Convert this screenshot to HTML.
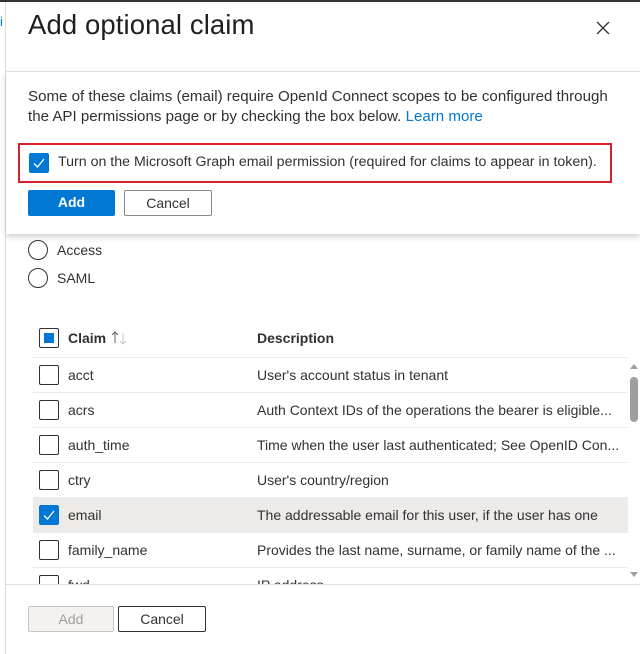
<!DOCTYPE html>
<html><head><style>
*{margin:0;padding:0;box-sizing:border-box}
body{width:640px;height:654px;overflow:hidden;background:#fff;font-family:"Liberation Sans",sans-serif;color:#323130;position:relative}
.abs{position:absolute;white-space:nowrap}
.cb{position:absolute;width:20px;height:20px;border:1px solid #323130;border-radius:2px;background:#fff}
.cb.on{background:#0078d4;border-color:#0078d4}
.row{position:absolute;left:33px;width:595px;height:35px;border-bottom:1px solid #edebe9;font-size:14px}
.row span{position:absolute;top:9px}
.btn{position:absolute;height:26px;font-size:14px;text-align:center;line-height:24px;border-radius:2px}
</style></head><body>
<div class="abs" style="left:0;top:0;width:640px;height:2px;background:#333"></div>
<div class="abs" style="left:0;top:2px;width:6px;height:652px;background:#fff;border-right:1px solid #e1dfdd"></div>
<div class="abs" style="left:0;top:14px;font-size:13px;color:#0078d4">i</div>
<div class="abs" style="left:28px;top:9px;font-size:27.5px;color:#201f1e;letter-spacing:0.1px">Add optional claim</div>
<svg class="abs" style="left:596px;top:21px" width="14" height="14" viewBox="0 0 14 14"><path d="M1 1L13 13M13 1L1 13" stroke="#323130" stroke-width="1.3"/></svg>
<div class="abs" style="left:6px;top:71px;width:634px;height:163px;background:#fff;border-top:1px solid #e1dfdd;box-shadow:0 3px 6px rgba(0,0,0,.18)">
</div>
<div class="abs" style="left:28px;top:87px;font-size:15.1px;line-height:20px;color:#323130">Some of these claims (email) require OpenId Connect scopes to be configured through<br>the API permissions page or by checking the box below. <span style="color:#0078d4">Learn more</span></div>
<div class="abs" style="left:18px;top:143px;width:594px;height:40px;border:2px solid #d81f2a"></div>
<div class="cb on" style="left:29px;top:153px"><svg width="18" height="18" viewBox="0 0 18 18"><path d="M4 9.5L7.5 13L14 5" stroke="#fff" stroke-width="1.3" fill="none"/></svg></div>
<div class="abs" style="left:58px;top:154px;font-size:14.2px">Turn on the Microsoft Graph email permission (required for claims to appear in token).</div>
<div class="btn" style="left:28px;top:190px;width:87px;background:#0078d4;color:#fff;font-weight:bold">Add</div>
<div class="btn" style="left:124px;top:190px;width:88px;border:1px solid #8a8886;background:#fff">Cancel</div>
<div class="abs" style="left:28px;top:240px;width:20px;height:20px;border:1px solid #323130;border-radius:50%"></div>
<div class="abs" style="left:57px;top:242px;font-size:14px">Access</div>
<div class="abs" style="left:28px;top:268px;width:20px;height:20px;border:1px solid #323130;border-radius:50%"></div>
<div class="abs" style="left:57px;top:270px;font-size:14px">SAML</div>
<div class="row" style="top:320px;height:38px;font-weight:bold"><div class="cb" style="left:6px;top:8px"><div style="position:absolute;left:4px;top:4px;width:10px;height:10px;background:#0078d4"></div></div><span style="left:35px;top:10px">Claim</span>
<svg style="position:absolute;left:78px;top:10px" width="20" height="16" viewBox="0 0 20 16"><path d="M4 13V2M1 5L4 2L7 5" stroke="#605e5c" stroke-width="1" fill="none"/><path d="M12 3V14M9 11L12 14L15 11" stroke="#c8c6c4" stroke-width="1" fill="none"/></svg>
<span style="left:224px;top:10px">Description</span></div>
<div class="row" style="top:358px"><div class="cb" style="left:6px;top:7px"></div><span style="left:35px">acct</span><span style="left:224px">User's account status in tenant</span></div>
<div class="row" style="top:393px"><div class="cb" style="left:6px;top:7px"></div><span style="left:35px">acrs</span><span style="left:224px">Auth Context IDs of the operations the bearer is eligible...</span></div>
<div class="row" style="top:428px"><div class="cb" style="left:6px;top:7px"></div><span style="left:35px">auth_time</span><span style="left:224px">Time when the user last authenticated; See OpenID Con...</span></div>
<div class="row" style="top:463px"><div class="cb" style="left:6px;top:7px"></div><span style="left:35px">ctry</span><span style="left:224px">User's country/region</span></div>
<div class="row" style="top:498px;background:#edebe9"><div class="cb on" style="left:6px;top:7px"><svg width="18" height="18" viewBox="0 0 18 18"><path d="M4 9.5L7.5 13L14 5" stroke="#fff" stroke-width="1.3" fill="none"/></svg></div><span style="left:35px">email</span><span style="left:224px">The addressable email for this user, if the user has one</span></div>
<div class="row" style="top:533px"><div class="cb" style="left:6px;top:7px"></div><span style="left:35px">family_name</span><span style="left:224px">Provides the last name, surname, or family name of the ...</span></div>
<div class="abs" style="left:33px;top:568px;width:595px;height:16px;overflow:hidden;font-size:14px"><div class="cb" style="left:6px;top:7px"></div><span style="position:absolute;left:35px;top:9px">fwd</span><span style="position:absolute;left:224px;top:9px">IP address</span></div>
<div class="abs" style="left:630px;top:364px;border:4px solid transparent;border-bottom:5px solid #a19f9d;border-top:0"></div>
<div class="abs" style="left:630px;top:377px;width:8px;height:45px;background:#a19f9d;border-radius:4px"></div>
<div class="abs" style="left:630px;top:572px;border:4px solid transparent;border-top:5px solid #a19f9d;border-bottom:0"></div>
<div class="abs" style="left:6px;top:584px;width:634px;height:1px;background:#e1dfdd"></div>
<div class="btn" style="left:28px;top:606px;width:86px;border:1px solid #c8c6c4;background:#f3f2f1;color:#a19f9d">Add</div>
<div class="btn" style="left:118px;top:606px;width:88px;border:1px solid #323130;background:#fff">Cancel</div>
</body></html>
